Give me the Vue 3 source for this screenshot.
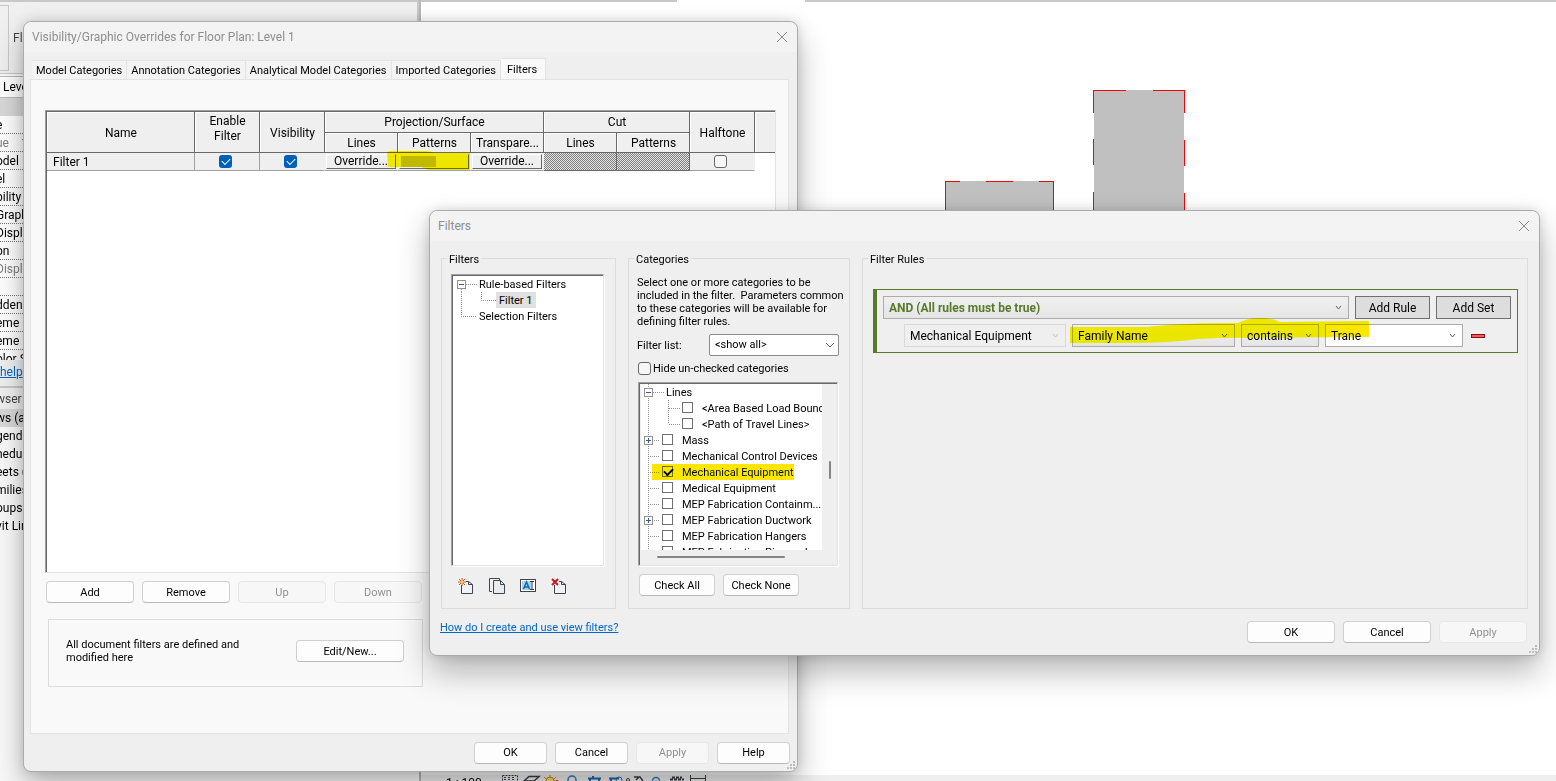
<script setup>
const properties = [
  { text: 'e' },
  { text: 'ue    1', dim: true },
  { text: 'odel' },
  { text: 'el' },
  { text: 'bility' },
  { text: 'Graph' },
  { text: 'Displa' },
  { text: 'on' },
  { text: 'Displ', dim: true },
  { text: '' },
  { text: 'dden l' },
  { text: 'eme' },
  { text: 'eme' },
  { text: 'olor S' },
]
const browser = ['ws (a', 'gends', 'hedul', 'eets (', 'milies', 'oups', 'vit Lin']
const tabs = [
  'Model Categories',
  'Annotation Categories',
  'Analytical Model Categories',
  'Imported Categories',
  'Filters',
]
const categories = [
  { name: 'Lines', kind: 'minus', bare: true },
  { name: '<Area Based Load Boundaries>', child: true },
  { name: '<Path of Travel Lines>', child: true, last: true },
  { name: 'Mass', kind: 'plus' },
  { name: 'Mechanical Control Devices' },
  { name: 'Mechanical Equipment', checked: true },
  { name: 'Medical Equipment' },
  { name: 'MEP Fabrication Containm...' },
  { name: 'MEP Fabrication Ductwork', kind: 'plus' },
  { name: 'MEP Fabrication Hangers' },
  { name: 'MEP Fabrication Pipework' },
]
</script>

<template>
  <div class="desktop">
    <aside class="palette">
      <div class="type-box">
        <div class="thumb"></div>
        <span>Flo</span>
      </div>
      <div class="type-combo">Leve</div>
      <div class="group-head"></div>
      <ul class="props">
        <li v-for="(p, i) in properties" :key="i" :class="{ dim: p.dim }">{{ p.text }}</li>
      </ul>
      <div class="help-row"><a href="#">help</a></div>
      <div class="browser-head">wser</div>
      <ul class="browser">
        <li v-for="b in browser" :key="b">{{ b }}</li>
      </ul>
    </aside>

    <main class="view">
      <div class="view-top"><i></i><i></i></div>
      <svg class="model" width="260" height="140" shape-rendering="crispEdges">
        <rect x="1" y="91" width="107" height="49" fill="#c0c0c0" />
        <rect x="149" y="0" width="90" height="140" fill="#c0c0c0" />
        <path
          d="M0.5 140V91.5H15M41 91.5H68M94 91.5H108.5V140M148.5 23V.5H181M208 .5H239.5V23M148.5 49V75M148.5 102V140M239.5 50V76M239.5 103V140"
          fill="none" stroke="#f00" />
      </svg>
      <div class="view-bar">
        <span>1 : 100</span>
        <svg width="210" height="14" fill="none" stroke="#3c4048">
          <rect x=".5" y=".5" width="15" height="10" stroke-dasharray="2 1" />
          <path d="M2 2.5H14M2 4.5H14" stroke-dasharray="2 2" />
          <path d="M22 6L27 1.5H37L32 6ZM22 6V11" stroke-width="1.5" />
          <circle cx="48" cy="6" r="4" fill="#ffd76b" stroke="#c98a10" />
          <path d="M48 0V2M42 2L44 4M54 2L52 4" stroke="#c98a10" />
          <circle cx="55" cy="7" r="2" fill="#d33" stroke="none" />
          <circle cx="70" cy="5" r="4" stroke="#2f78c4" stroke-width="1.5" />
          <path d="M86 3.5H99M88 6V3M97 6V3M91 1V3" stroke="#1769b8" stroke-width="2" />
          <path d="M107 3.5H117M109 6V3" stroke="#1769b8" stroke-width="2" />
          <circle cx="117" cy="5" r="3" stroke="#1769b8" />
          <circle cx="126" cy="5" r="1.5" />
          <path d="M132 2L138 2L141 6M134 5L137 2" stroke-width="1.5" />
          <circle cx="154" cy="6" r="3.5" stroke="#2f78c4" stroke-width="1.5" />
          <path d="M168 4.5H182M170 2.5H180" stroke-width="2" stroke-dasharray="3 1" />
          <path d="M188.500 0V8M203.500 0V8M188 3.500H204" />
        </svg>
      </div>
    </main>

    <section class="dialog overrides">
      <header class="title">
        <h1>Visibility/Graphic Overrides for Floor Plan: Level 1</h1>
        <button class="close" aria-label="Close overrides">
          <svg width="12" height="12"><path d="M1 1L11 11M11 1L1 11" stroke="#8a8a8a" /></svg>
        </button>
      </header>
      <nav class="tabs">
        <button v-for="t in tabs" :key="t" :class="{ active: t === 'Filters' }">{{ t }}</button>
      </nav>
      <div class="pane">
        <div class="grid-frame">
          <table>
            <colgroup>
              <col class="c-name" /><col class="c-flag" /><col class="c-flag" />
              <col class="c-cell" /><col class="c-cell" /><col class="c-cell" />
              <col class="c-cell" /><col class="c-cell" /><col class="c-flag" /><col />
            </colgroup>
            <thead>
              <tr>
                <th rowspan="2">Name</th>
                <th rowspan="2" class="two-line">Enable<br />Filter</th>
                <th rowspan="2">Visibility</th>
                <th colspan="3">Projection/Surface</th>
                <th colspan="2">Cut</th>
                <th rowspan="2">Halftone</th>
                <th rowspan="2" class="rest"></th>
              </tr>
              <tr>
                <th>Lines</th><th>Patterns</th><th>Transpare...</th><th>Lines</th><th>Patterns</th>
              </tr>
            </thead>
            <tbody>
              <tr>
                <td class="name">Filter 1</td>
                <td class="flag"><input type="checkbox" class="blue" checked aria-label="Enable Filter" /></td>
                <td class="flag open"><input type="checkbox" class="blue" checked aria-label="Visibility" /></td>
                <td class="open"><button class="classic">Override...</button></td>
                <td class="open"><button class="classic swatch" aria-label="Pattern override"><i></i></button></td>
                <td class="open"><button class="classic">Override...</button></td>
                <td class="hatch"></td>
                <td class="hatch"></td>
                <td class="flag open"><input type="checkbox" class="round" aria-label="Halftone" /></td>
                <td class="blank"></td>
              </tr>
            </tbody>
          </table>
          <svg class="marker m-table" width="84" height="22">
            <path d="M0 2Q4 0 12 1L38 1Q44 1 47 3L83 3V20H42L34 17L1 17Z" />
          </svg>
        </div>
        <div class="row-buttons">
          <button class="btn">Add</button>
          <button class="btn">Remove</button>
          <button class="btn" disabled>Up</button>
          <button class="btn" disabled>Down</button>
        </div>
        <div class="note">
          <p>All document filters are defined and<br />modified here</p>
          <button class="btn wide">Edit/New...</button>
        </div>
      </div>
      <footer class="actions narrow">
        <button class="btn">OK</button>
        <button class="btn">Cancel</button>
        <button class="btn" disabled>Apply</button>
        <button class="btn">Help</button>
      </footer>
      <svg class="grip" width="9" height="9" fill="#bdbdbd">
        <path d="M6 0h2v2h-2zM3 3h2v2h-2zM6 3h2v2h-2zM0 6h2v2h-2zM3 6h2v2h-2zM6 6h2v2h-2z" />
      </svg>
    </section>

    <section class="dialog filters">
      <header class="title">
        <h1>Filters</h1>
        <button class="close" aria-label="Close filters">
          <svg width="12" height="12"><path d="M1 1L11 11M11 1L1 11" stroke="#8a8a8a" /></svg>
        </button>
      </header>
      <div class="columns">
        <fieldset>
          <legend>Filters</legend>
          <div class="sunken filter-tree">
            <div class="node">
              <svg width="26" height="16" shape-rendering="crispEdges">
                <path class="dots" d="M8.500 9V16M13 8.500H24" />
                <rect x="4.500" y="4.500" width="8" height="8" fill="#fff" stroke="#919191" />
                <path d="M6 8.500H11" stroke="#3b5a9a" />
              </svg>
              <span>Rule-based Filters</span>
            </div>
            <div class="node">
              <svg width="43" height="16" shape-rendering="crispEdges">
                <path class="dots" d="M8.500 0V16M28.500 0V8M28 8.500H43" />
              </svg>
              <span class="picked">Filter 1</span>
            </div>
            <div class="node">
              <svg width="26" height="16" shape-rendering="crispEdges">
                <path class="dots" d="M8.500 0V8M8 8.500H24" />
              </svg>
              <span>Selection Filters</span>
            </div>
          </div>
          <div class="tools">
            <button aria-label="New">
              <svg width="16" height="16" fill="none">
                <path d="M3.500 7V15.500H14.500V6.500L10.500 3.500H8" stroke="#3f4450" fill="#f1f2f5" />
                <path d="M10.500 3.500V6.500H14.500" stroke="#3f4450" />
                <path d="M4 0V8M0 4H8M1 1L7 7M7 1L1 7" stroke="#d2521b" />
                <circle cx="4" cy="4" r="1.500" fill="#ffd34d" />
              </svg>
            </button>
            <button aria-label="Duplicate">
              <svg width="16" height="16" fill="none" stroke="#3f4450">
                <path d="M3 13.500H.5V.5H10.500V2" />
                <path d="M4.500 2.500H11.500L15.500 6.500V15.500H4.500Z" fill="#e9ebef" />
                <path d="M11.500 2.500V6.500H15.500" />
              </svg>
            </button>
            <button aria-label="Rename">
              <svg width="16" height="16" fill="none">
                <rect x=".5" y="1.500" width="15" height="12" fill="#fff" stroke="#3f4450" />
                <rect x="2" y="3" width="9" height="9" fill="#a9d3ee" />
                <path d="M3.500 11L6.500 4L9.500 11M4.500 9H8.500" stroke="#1667b0" stroke-width="1.500" />
                <path d="M10 3.500H14M12 3.500V11.500M10 11.500H14" stroke="#333" />
              </svg>
            </button>
            <button aria-label="Delete">
              <svg width="16" height="16" fill="none">
                <path d="M3.500 7V15.500H14.500V6.500L10.500 3.500H8" stroke="#3f4450" fill="#f1f2f5" />
                <path d="M10.500 3.500V6.500H14.500" stroke="#3f4450" />
                <path d="M1 1L7 7M7 1L1 7" stroke="#c41a1a" stroke-width="2" />
              </svg>
            </button>
          </div>
        </fieldset>

        <fieldset>
          <legend>Categories</legend>
          <p class="hint">
            Select one or more categories to be<br />included in the filter.&nbsp; Parameters common<br />to
            these categories will be available for<br />defining filter rules.
          </p>
          <div class="list-row">
            <label for="filter-list">Filter list:</label>
            <div class="select light">
              <select id="filter-list"><option>&lt;show all&gt;</option></select>
              <svg width="10" height="6"><path d="M1 1L5 5L9 1" /></svg>
            </div>
          </div>
          <label class="hide"><input type="checkbox" class="round" />Hide un-checked categories</label>
          <div class="sunken cat-box">
            <div class="cat-list">
              <div v-for="c in categories" :key="c.name" class="node">
                <svg :width="c.child ? 41 : c.bare ? 25 : 21" height="16" shape-rendering="crispEdges">
                  <path class="dots" d="M7.500 0V16" />
                  <path v-if="c.child" class="dots" :d="c.last ? 'M27.500 0V8M28 8.500H39' : 'M27.500 0V16M28 8.500H39'" />
                  <path v-else class="dots" :d="c.bare ? 'M12 8.500H23' : 'M9 8.500H18'" />
                  <template v-if="c.kind">
                    <rect x="3.500" y="4.500" width="8" height="8" fill="#fff" stroke="#919191" />
                    <path :d="c.kind === 'plus' ? 'M5 8.500H10M7.500 6V11' : 'M5 8.500H10'" stroke="#3b5a9a" />
                  </template>
                </svg>
                <span v-if="c.bare">{{ c.name }}</span>
                <label v-else><input type="checkbox" class="square" :checked="c.checked" />{{ c.name }}</label>
              </div>
            </div>
            <i class="bar-v"></i>
            <i class="bar-h"></i>
            <svg class="marker m-cat" width="143" height="18"><path d="M1 1H143V17H1Z" /></svg>
          </div>
          <div class="checks">
            <button class="btn">Check All</button>
            <button class="btn">Check None</button>
          </div>
        </fieldset>

        <fieldset class="rules">
          <legend>Filter Rules</legend>
          <div class="rule-set">
            <div class="line">
              <div class="select and">
                <select aria-label="Rule set operator"><option>AND (All rules must be true)</option></select>
                <svg width="7" height="5"><path d="M1 1L3.500 4L6 1" /></svg>
              </div>
              <button class="flat">Add Rule</button>
              <button class="flat">Add Set</button>
            </div>
            <div class="line second">
              <div class="select off">
                <select disabled aria-label="Category"><option>Mechanical Equipment</option></select>
                <svg width="7" height="5"><path d="M1 1L3.500 4L6 1" /></svg>
              </div>
              <div class="select param">
                <select aria-label="Parameter"><option>Family Name</option></select>
                <svg width="7" height="5"><path d="M1 1L3.500 4L6 1" /></svg>
              </div>
              <div class="select test">
                <select aria-label="Test"><option>contains</option></select>
                <svg width="7" height="5"><path d="M1 1L3.500 4L6 1" /></svg>
              </div>
              <div class="select value">
                <input type="text" value="Trane" aria-label="Value" />
                <svg width="7" height="5"><path d="M1 1L3.500 4L6 1" /></svg>
              </div>
              <button class="minus" aria-label="Remove rule"></button>
            </div>
            <svg class="marker m-rule" width="300" height="28">
              <path d="M0 9L78 9Q110 5 168 5Q178 0 190 0Q202 0 210 4L299 3V19L150 20L128 21Q100 25 60 25L0 25Z" />
            </svg>
          </div>
        </fieldset>
      </div>
      <footer class="actions">
        <a href="#">How do I create and use view filters?</a>
        <button class="btn">OK</button>
        <button class="btn">Cancel</button>
        <button class="btn" disabled>Apply</button>
      </footer>
      <svg class="grip" width="9" height="9" fill="#bdbdbd">
        <path d="M6 0h2v2h-2zM3 3h2v2h-2zM6 3h2v2h-2zM0 6h2v2h-2zM3 6h2v2h-2zM6 6h2v2h-2z" />
      </svg>
    </section>
  </div>
</template>

<style>
body {
  margin: 0;
  overflow: hidden;
}
</style>

<style scoped>
* {
  box-sizing: border-box;
}
.desktop {
  --ui: Roboto, 'Open Sans', sans-serif;
  --small: Roboto, 'Open Sans', sans-serif;
  --tree: Roboto, 'Liberation Sans', sans-serif;
  position: relative;
  display: flex;
  height: 100vh;
  overflow: hidden;
  background: #efefef;
  font: 12px/18px var(--ui);
  color: #000;
}
ul,
p,
h1 {
  margin: 0;
  padding: 0;
  list-style: none;
}
button,
input,
select {
  font: inherit;
  color: inherit;
  margin: 0;
  padding: 0;
}

/* docked palettes */
.palette {
  width: 421px;
  flex: none;
  border-right: 2px solid #b8b8b8;
  background: #fafafa;
  display: flex;
  flex-direction: column;
  white-space: pre;
}
.type-box {
  display: flex;
  align-items: center;
  gap: 4px;
  height: 74px;
  background: #f0f0f0;
  border: solid #c8c8c8;
  border-width: 2px 2px 1px 0;
  color: #444;
}
.thumb {
  width: 9px;
  height: 66px;
  border: solid #c8c8c8;
  border-width: 1px 1px 1px 0;
}
.type-combo {
  height: 22px;
  margin-top: 2px;
  padding-left: 3px;
  line-height: 20px;
  background: #fff;
  border: solid #bbb;
  border-width: 1px 0;
}
.group-head {
  height: 18px;
  background: #d9d9d9;
}
.props {
  height: 244px;
  overflow: hidden;
  background: #fff;
}
.props li,
.browser li,
.browser-head {
  text-indent: -4px;
}
.props li {
  height: 18px;
  border-bottom: 1px dotted #777;
}
.dim {
  color: #808080;
}
.help-row {
  height: 28px;
  line-height: 24px;
  background: #f0f0f0;
  border-bottom: 2px solid #c8c8c8;
}
a {
  color: #0066cc;
  text-decoration: underline;
}
.browser-head {
  height: 21px;
  line-height: 23px;
  color: #444;
  background: #f0f0f0;
}
.browser li:first-child {
  background: #d9d9d9;
}

/* drawing view */
.view {
  position: relative;
  flex: 1;
  display: flex;
  flex-direction: column;
  justify-content: space-between;
  background: #fff;
}
.view-top {
  display: grid;
  grid-template-columns: 256px 1fr;
  gap: 128px;
}
.view-top i {
  height: 2px;
  background: #c8c8c8;
}
.model {
  position: absolute;
  left: 524px;
  top: 90px;
}
.view-bar {
  display: flex;
  gap: 20px;
  height: 6px;
  padding-left: 25px;
  overflow: hidden;
  background: #efefef;
}
.view-bar span {
  width: 36px;
  line-height: 16px;
  white-space: nowrap;
}
.view-bar svg {
  flex: none;
}

/* dialogs */
.dialog {
  position: absolute;
  display: flex;
  flex-direction: column;
  border: 1px solid #ababab;
  border-radius: 8px;
  background: #efefef;
  box-shadow: 0 16px 32px rgba(0, 0, 0, 0.28), 0 0 12px rgba(0, 0, 0, 0.14);
}
.overrides {
  left: 23px;
  top: 21px;
  width: 775px;
  height: 751px;
}
.filters {
  left: 429px;
  right: 16px;
  top: 210px;
}
.title {
  display: flex;
  justify-content: space-between;
  align-items: center;
  height: 30px;
  padding: 0 9px 0 8px;
  border-radius: 8px 8px 0 0;
  background: #f3f3f3;
}
.title h1 {
  font: 12px/18px var(--ui);
  color: #8d8d8d;
}
.close {
  display: flex;
  border: 0;
  background: none;
}
.tabs {
  display: flex;
  align-items: flex-end;
  height: 27px;
  padding-left: 8px;
}
.tabs button {
  height: 19px;
  padding: 1px 4px 0;
  border: solid #e3e3e3;
  border-width: 1px 1px 0 0;
  background: #f3f3f3;
  font: 11px/17px var(--small);
  white-space: nowrap;
}
.tabs .active {
  height: 22px;
  margin-bottom: -1px;
  padding: 0 8px 1px 6px;
  background: #f9f9f9;
}
.pane {
  flex: 1;
  margin: 0 8px 0 6px;
  padding: 30px 12px 0 14px;
  border: 1px solid #e3e3e3;
  background: #f9f9f9;
}
.grid-frame {
  position: relative;
  height: 463px;
  border: 1px solid #e3e3e3;
  border-top: 1px solid #a0a0a0;
  border-left: 1px solid #a0a0a0;
  background: #fff;
  box-shadow: inset 1px 1px #696969;
  padding: 1px 0 0 1px;
}
table {
  width: 100%;
  table-layout: fixed;
  border-collapse: separate;
  border-spacing: 0;
}
.c-name { width: 148px; }
.c-flag { width: 65px; }
.c-cell { width: 73px; }
th,
td {
  padding: 0;
  height: 20px;
  overflow: hidden;
  text-align: center;
  vertical-align: middle;
  white-space: nowrap;
  background: #efefef;
  line-height: 15px;
}
th {
  padding: 2px 0 0 1px;
  font-weight: 400;
  border: solid #696969;
  border-width: 0 1px 1px 0;
  box-shadow: inset 1px 1px #fff;
}
.two-line {
  padding-bottom: 8px;
}
.rest {
  border-right: 0;
}
td {
  height: 18px;
  border: solid #a0a0a0;
  border-width: 0 1px 1px 0;
}
.open {
  border-right-color: #efefef;
}
td.name {
  padding-top: 1px;
  padding-left: 6px;
  text-align: left;
}
td.flag {
  padding-right: 3px;
}
td input {
  display: block;
}
td.blank {
  background: #fff;
  border: 0;
}
.hatch {
  border-color: #696969;
  background: repeating-conic-gradient(#808080 0 25%, #e4e4e4 0 50%) 0 0 / 2px 2px;
}
.classic {
  display: block;
  width: 70px;
  height: 15px;
  margin: 0 0 0 1px;
  border: solid;
  border-width: 1px;
  border-color: #fff #696969 #696969 #fff;
  background: #efefef;
  line-height: 13px;
}
.swatch i {
  display: block;
  width: 35px;
  height: 11px;
  margin-left: 1px;
  background: #c0b900;
}
.blue,
.round,
.square {
  appearance: none;
  position: relative;
  width: 13px;
  height: 13px;
  margin: 0 auto;
  border-radius: 3px;
}
.blue {
  background: #005fb8;
}
.blue::before {
  content: '';
  position: absolute;
  left: 3px;
  top: 3px;
  width: 7px;
  height: 4px;
  border: solid #fff;
  border-width: 0 0 1px 1px;
  transform: rotate(-45deg);
}
.round {
  border: 1px solid #666;
  background: #f7f7f7;
}
.row-buttons {
  display: flex;
  gap: 8px;
  margin: 8px 0 0 1px;
}
.btn {
  width: 88px;
  height: 22px;
  flex: none;
  padding-top: 1px;
  border: 1px solid #d0d0d0;
  border-bottom-color: #b9b9b9;
  border-radius: 4px;
  background: #fdfdfd;
  font: 11px/18px var(--small);
  white-space: nowrap;
}
.btn:disabled {
  background: #f7f7f7;
  border-color: #e6e6e6;
  color: #919191;
}
.wide {
  width: 108px;
}
.note {
  display: flex;
  justify-content: space-between;
  width: 375px;
  height: 68px;
  margin: 16px 0 0 3px;
  padding: 20px 18px 0 17px;
  border: 1px solid #dcdcdc;
  font: 11px/13px var(--small);
}
.note p {
  margin-top: -2px;
}
.actions {
  display: flex;
  align-items: center;
  gap: 8px;
  justify-content: flex-end;
  font: 11px/16px var(--small);
}
.narrow {
  height: 37px;
  padding-right: 7px;
}
.narrow .btn {
  width: 73px;
}
.grip {
  position: absolute;
  right: 1px;
  bottom: 1px;
}

/* filters dialog */
.columns {
  display: grid;
  grid-template-columns: 175px 222px 1fr;
  gap: 12px;
  padding: 10px 11px 0;
}
fieldset {
  min-width: 0;
  margin: 0;
  padding: 0 10px;
  border: 1px solid #dcdcdc;
  font: 11px/13px var(--small);
}
legend {
  margin-left: -5px;
  padding: 2px 2px 0;
  line-height: 13px;
}
.sunken {
  position: relative;
  border: 1px solid #e3e3e3;
  border-top-color: #a0a0a0;
  border-left-color: #a0a0a0;
  box-shadow: inset 1px 1px #696969, 1px 1px #fff;
  padding: 1px 0 0 1px;
}
.filter-tree {
  width: 153px;
  height: 292px;
  margin-top: 8px;
  margin-left: -1px;
  background: #fff;
}
.node {
  display: flex;
  height: 16px;
  font: 11px/17px var(--tree);
  white-space: nowrap;
}
.node svg {
  flex: none;
}
.node label {
  display: flex;
  align-items: flex-start;
}
.dots {
  fill: none;
  stroke: #909090;
  stroke-dasharray: 1 1;
}
.picked {
  padding: 0 3px;
  background: #e0e0e0;
}
.square {
  width: 11px;
  height: 11px;
  margin: 2px 9px 0 0;
  border: 1px solid #707070;
  border-radius: 0;
  background: #fff;
}
.square:checked::before {
  content: '';
  position: absolute;
  left: 1px;
  top: 1px;
  width: 7px;
  height: 4px;
  border: solid #000;
  border-width: 0 0 2px 2px;
  transform: rotate(-45deg);
}
.tools {
  display: flex;
  gap: 15px;
  margin: 12px 0 14px 6px;
}
.tools button {
  display: flex;
  border: 0;
  background: none;
}
.hint {
  margin: 10px -8px 0 -2px;
  white-space: nowrap;
}
.list-row {
  display: flex;
  justify-content: space-between;
  align-items: center;
  margin: 6px 0 0 -2px;
}
.select {
  position: relative;
  display: flex;
  align-items: center;
  height: 23px;
  border: 1px solid #acacac;
  background: linear-gradient(#f0f0f0, #e5e5e5);
  font: 12px/20px var(--ui);
}
.select select,
.select input {
  appearance: none;
  width: 100%;
  height: 100%;
  padding: 0 5px;
  border: 0;
  outline: 0;
  opacity: 1;
  background: none;
}
.select svg {
  position: absolute;
  right: 6px;
  fill: none;
  stroke: #606060;
}
.light {
  width: 130px;
  height: 22px;
  border: 1px solid #8a8a8a;
  border-radius: 2px;
  background: #fff;
  font: 11px/18px var(--small);
}
.light svg {
  right: 3px;
}
.hide {
  display: flex;
  align-items: center;
  gap: 2px;
  margin: 6px 0 0 -1px;
}
.hide .round {
  margin: 0;
}
.cat-box {
  height: 184px;
  margin: 7px 1px 0 -1px;
  padding-left: 2px;
}
.cat-list {
  width: 181px;
  height: 166px;
  overflow: hidden;
  background: #fff;
}
.bar-v,
.bar-h {
  position: absolute;
  background: #858585;
  border-radius: 1px;
}
.bar-v {
  right: 6px;
  top: 78px;
  width: 2px;
  height: 18px;
}
.bar-h {
  left: 18px;
  bottom: 7px;
  width: 128px;
  height: 2px;
}
.marker {
  position: absolute;
  fill: #ffe600;
  mix-blend-mode: darken;
  pointer-events: none;
}
.m-cat {
  left: 12px;
  top: 80px;
}
.m-table {
  left: 341px;
  top: 39px;
}
.checks {
  display: flex;
  gap: 8px;
  margin-top: 8px;
}
.checks .btn {
  width: 76px;
}
.rule-set {
  position: relative;
  height: 64px;
  margin: 23px -1px 0 1px;
  padding: 6px;
  border: 1px solid #587a2b;
  border-left-width: 4px;
}
.rules {
  padding-left: 9px;
}
.rules legend {
  margin-left: -4px;
}
.line {
  display: flex;
  gap: 6px;
  height: 23px;
}
.second {
  margin-top: 5px;
  padding-left: 21px;
}
.and {
  flex: 1;
  font-weight: 700;
  color: #587a2b;
}
.flat {
  width: 75px;
  border: 1px solid #707070;
  background: #dddddd;
  font: 12px/20px var(--ui);
}
.off {
  width: 162px;
  border-color: #d9d9d9;
  background: #efefef;
}
.off svg {
  stroke: #bfbfbf;
}
.param {
  width: 163px;
}
.test {
  width: 78px;
}
.value {
  width: 138px;
  background: #fff;
}
.minus {
  width: 14px;
  height: 4px;
  align-self: center;
  margin-left: 2px;
  border: 1px solid #8f0a0a;
  background: #ff5a52;
}
.m-rule {
  left: 193px;
  top: 28px;
}
.filters .actions {
  height: 46px;
  padding: 0 12px 0 10px;
}
.filters .actions a {
  margin: -8px auto 0 0;
}
</style>
